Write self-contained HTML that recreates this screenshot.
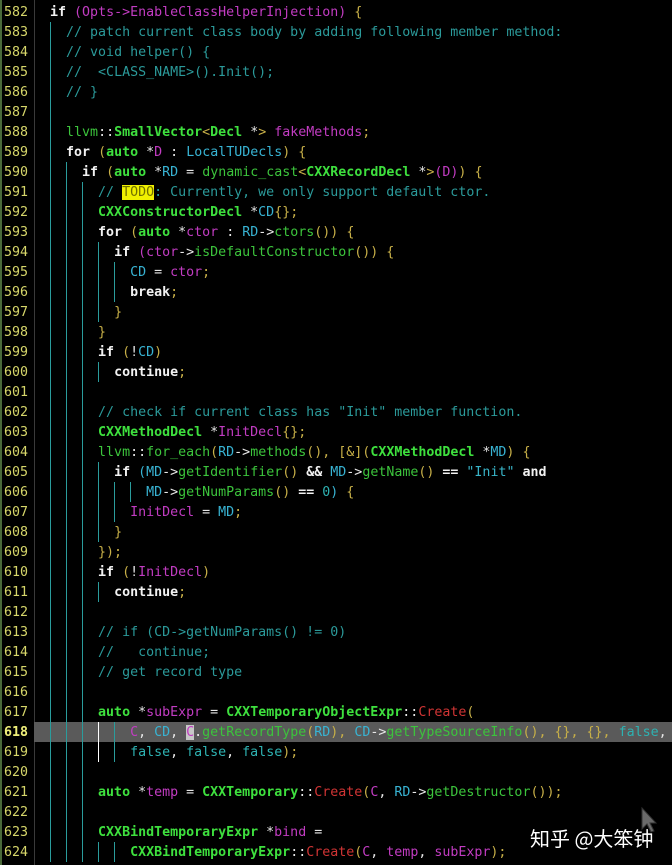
<!DOCTYPE html>
<html><head><meta charset="utf-8"><style>
html,body{margin:0;padding:0;background:#000;width:672px;height:865px;overflow:hidden;position:relative}
.ln{position:absolute;left:0;height:20px;width:672px;font:13.3px/20px "DejaVu Sans Mono","Liberation Mono",monospace;white-space:pre;color:#e8e8e8}
.n{position:absolute;left:4px;top:1px;color:#d6d66a}
.code{position:absolute;left:34px;top:1px}
.g{position:absolute;left:50px;top:0;height:20px;background:repeating-linear-gradient(to right,#2a9c9c 0 1px,transparent 1px 16px)}
.g4{width:1px}.g6{width:17px}.g8{width:33px}.g10{width:49px}.g12{width:65px}.g14{width:81px}
.k{color:#f2f2f2;font-weight:bold}
.t{color:#3ee03e;font-weight:bold}
.f{color:#3cc43c}
.c{color:#2b9a9a}
.v{color:#38b4d4}
.m{color:#c23cc2}
.r{color:#d03434}
.p{color:#c8b048}
.b{color:#2eb2b2}
.s{color:#38b4c8}
.o{color:#e8e8e8}
</style></head><body>
<div style="position:absolute;left:0;top:0;width:2px;height:865px;background:#4a6a3a"></div>
<div style="position:absolute;left:34px;top:0;width:1px;height:865px;background:#3a3a3a"></div>

<div class="ln" style="top:2px"><span class="n">582</span><span class="code">  <span class="k">if</span> <span class="m">(Opts-&gt;EnableClassHelperInjection)</span> <span class="p">{</span></span></div>
<div class="ln" style="top:22px"><span class="n">583</span><div class="g g4"></div><span class="code">    <span class="c">// patch current class body by adding following member method:</span></span></div>
<div class="ln" style="top:42px"><span class="n">584</span><div class="g g4"></div><span class="code">    <span class="c">// void helper() {</span></span></div>
<div class="ln" style="top:62px"><span class="n">585</span><div class="g g4"></div><span class="code">    <span class="c">//  &lt;CLASS_NAME&gt;().Init();</span></span></div>
<div class="ln" style="top:82px"><span class="n">586</span><div class="g g4"></div><span class="code">    <span class="c">// }</span></span></div>
<div class="ln" style="top:102px"><span class="n">587</span><div class="g g4"></div></div>
<div class="ln" style="top:122px"><span class="n">588</span><div class="g g4"></div><span class="code">    <span class="f">llvm</span>::<span class="t">SmallVector</span><span class="p">&lt;</span><span class="t">Decl</span> *<span class="p">&gt;</span> <span class="m">fakeMethods</span><span class="p">;</span></span></div>
<div class="ln" style="top:142px"><span class="n">589</span><div class="g g4"></div><span class="code">    <span class="k">for</span> <span class="p">(</span><span class="t">auto</span> *<span class="m">D</span> : <span class="v">LocalTUDecls</span><span class="p">)</span> <span class="p">{</span></span></div>
<div class="ln" style="top:162px"><span class="n">590</span><div class="g g6"></div><span class="code">      <span class="k">if</span> <span class="p">(</span><span class="t">auto</span> *<span class="v">RD</span> = <span class="f">dynamic_cast</span><span class="p">&lt;</span><span class="t">CXXRecordDecl</span> *<span class="p">&gt;</span><span class="m">(D)</span><span class="p">)</span> <span class="p">{</span></span></div>
<div class="ln" style="top:182px"><span class="n">591</span><div class="g g8"></div><span class="code">        <span class="c">// <span style="background:#f0f000;color:#707000">TODO</span>: Currently, we only support default ctor.</span></span></div>
<div class="ln" style="top:202px"><span class="n">592</span><div class="g g8"></div><span class="code">        <span class="t">CXXConstructorDecl</span> *<span class="v">CD</span><span class="p">{};</span></span></div>
<div class="ln" style="top:222px"><span class="n">593</span><div class="g g8"></div><span class="code">        <span class="k">for</span> <span class="p">(</span><span class="t">auto</span> *<span class="m">ctor</span> : <span class="v">RD</span>-&gt;<span class="f">ctors</span><span class="p">())</span> <span class="p">{</span></span></div>
<div class="ln" style="top:242px"><span class="n">594</span><div class="g g10"></div><span class="code">          <span class="k">if</span> <span class="m">(ctor</span>-&gt;<span class="f">isDefaultConstructor</span><span class="p">())</span> <span class="p">{</span></span></div>
<div class="ln" style="top:262px"><span class="n">595</span><div class="g g12"></div><span class="code">            <span class="v">CD</span> = <span class="m">ctor</span><span class="p">;</span></span></div>
<div class="ln" style="top:282px"><span class="n">596</span><div class="g g12"></div><span class="code">            <span class="k">break</span><span class="p">;</span></span></div>
<div class="ln" style="top:302px"><span class="n">597</span><div class="g g10"></div><span class="code">          <span class="p">}</span></span></div>
<div class="ln" style="top:322px"><span class="n">598</span><div class="g g8"></div><span class="code">        <span class="p">}</span></span></div>
<div class="ln" style="top:342px"><span class="n">599</span><div class="g g8"></div><span class="code">        <span class="k">if</span> <span class="p">(</span>!<span class="v">CD</span><span class="p">)</span></span></div>
<div class="ln" style="top:362px"><span class="n">600</span><div class="g g10"></div><span class="code">          <span class="k">continue</span><span class="p">;</span></span></div>
<div class="ln" style="top:382px"><span class="n">601</span><div class="g g8"></div></div>
<div class="ln" style="top:402px"><span class="n">602</span><div class="g g8"></div><span class="code">        <span class="c">// check if current class has "Init" member function.</span></span></div>
<div class="ln" style="top:422px"><span class="n">603</span><div class="g g8"></div><span class="code">        <span class="t">CXXMethodDecl</span> *<span class="m">InitDecl</span><span class="p">{};</span></span></div>
<div class="ln" style="top:442px"><span class="n">604</span><div class="g g8"></div><span class="code">        <span class="f">llvm</span>::<span class="f">for_each</span><span class="p">(</span><span class="v">RD</span>-&gt;<span class="f">methods</span><span class="p">(),</span> <span class="p">[&amp;](</span><span class="t">CXXMethodDecl</span> *<span class="v">MD</span><span class="p">)</span> <span class="p">{</span></span></div>
<div class="ln" style="top:462px"><span class="n">605</span><div class="g g10"></div><span class="code">          <span class="k">if</span> <span class="v">(MD</span>-&gt;<span class="f">getIdentifier</span><span class="p">()</span> <span class="k">&amp;&amp;</span> <span class="v">MD</span>-&gt;<span class="f">getName</span><span class="p">()</span> <span class="k">==</span> <span class="s">"Init"</span> <span class="k">and</span></span></div>
<div class="ln" style="top:482px"><span class="n">606</span><div class="g g14"></div><span class="code">              <span class="v">MD</span>-&gt;<span class="f">getNumParams</span><span class="p">()</span> <span class="k">==</span> <span class="b">0</span><span class="v">)</span> <span class="p">{</span></span></div>
<div class="ln" style="top:502px"><span class="n">607</span><div class="g g12"></div><span class="code">            <span class="m">InitDecl</span> = <span class="v">MD</span><span class="p">;</span></span></div>
<div class="ln" style="top:522px"><span class="n">608</span><div class="g g10"></div><span class="code">          <span class="p">}</span></span></div>
<div class="ln" style="top:542px"><span class="n">609</span><div class="g g8"></div><span class="code">        <span class="p">});</span></span></div>
<div class="ln" style="top:562px"><span class="n">610</span><div class="g g8"></div><span class="code">        <span class="k">if</span> <span class="p">(</span>!<span class="m">InitDecl</span><span class="p">)</span></span></div>
<div class="ln" style="top:582px"><span class="n">611</span><div class="g g10"></div><span class="code">          <span class="k">continue</span><span class="p">;</span></span></div>
<div class="ln" style="top:602px"><span class="n">612</span><div class="g g8"></div></div>
<div class="ln" style="top:622px"><span class="n">613</span><div class="g g8"></div><span class="code">        <span class="c">// if (CD-&gt;getNumParams() != 0)</span></span></div>
<div class="ln" style="top:642px"><span class="n">614</span><div class="g g8"></div><span class="code">        <span class="c">//   continue;</span></span></div>
<div class="ln" style="top:662px"><span class="n">615</span><div class="g g8"></div><span class="code">        <span class="c">// get record type</span></span></div>
<div class="ln" style="top:682px"><span class="n">616</span><div class="g g8"></div></div>
<div class="ln" style="top:702px"><span class="n">617</span><div class="g g8"></div><span class="code">        <span class="t">auto</span> *<span class="m">subExpr</span> = <span class="t">CXXTemporaryObjectExpr</span>::<span class="r">Create</span><span class="p">(</span></span></div>
<div class="ln" style="top:722px;background:linear-gradient(to right,transparent 34px,#5a5a5a 34px)"><span class="n" style="font-weight:bold;color:#f0f07a">618</span><div class="g g12"></div><div style="position:absolute;left:98px;top:0;width:1px;height:20px;background:#fff"></div><span class="code">            <span class="m">C</span>, <span class="v">CD</span>, <span style="background:#c8c8c8;color:#c23cc2">C</span>.<span class="f">getRecordType</span><span class="p">(</span><span class="v">RD</span><span class="p">),</span> <span class="v">CD</span>-&gt;<span class="f">getTypeSourceInfo</span><span class="p">(),</span> <span class="p">{},</span> <span class="p">{},</span> <span class="b">false</span>,</span></div>
<div class="ln" style="top:742px"><span class="n">619</span><div class="g g12"></div><div style="position:absolute;left:98px;top:0;width:1px;height:20px;background:#fff"></div><span class="code">            <span class="b">false</span>, <span class="b">false</span>, <span class="b">false</span><span class="p">);</span></span></div>
<div class="ln" style="top:762px"><span class="n">620</span><div class="g g8"></div></div>
<div class="ln" style="top:782px"><span class="n">621</span><div class="g g8"></div><span class="code">        <span class="t">auto</span> *<span class="m">temp</span> = <span class="t">CXXTemporary</span>::<span class="r">Create</span><span class="p">(</span><span class="m">C</span>, <span class="v">RD</span>-&gt;<span class="f">getDestructor</span><span class="p">());</span></span></div>
<div class="ln" style="top:802px"><span class="n">622</span><div class="g g8"></div></div>
<div class="ln" style="top:822px"><span class="n">623</span><div class="g g8"></div><span class="code">        <span class="t">CXXBindTemporaryExpr</span> *<span class="m">bind</span> =</span></div>
<div class="ln" style="top:842px"><span class="n">624</span><div class="g g12"></div><span class="code">            <span class="t">CXXBindTemporaryExpr</span>::<span class="r">Create</span><span class="p">(</span><span class="m">C</span>, <span class="m">temp</span>, <span class="m">subExpr</span><span class="p">);</span></span></div>

<svg style="position:absolute;left:641px;top:807px" width="16" height="26" viewBox="0 0 16 26"><path d="M1 1 L1 22 L6 17 L10 25 L13 24 L9 16 L15 16 Z" fill="#6a6a6a" stroke="#333" stroke-width="1"/></svg>
<div style="position:absolute;left:530px;top:825px;font:20px/26px 'Noto Sans CJK SC','WenQuanYi Zen Hei',sans-serif;color:#fff;white-space:nowrap">知乎 @大笨钟</div>
</body></html>
